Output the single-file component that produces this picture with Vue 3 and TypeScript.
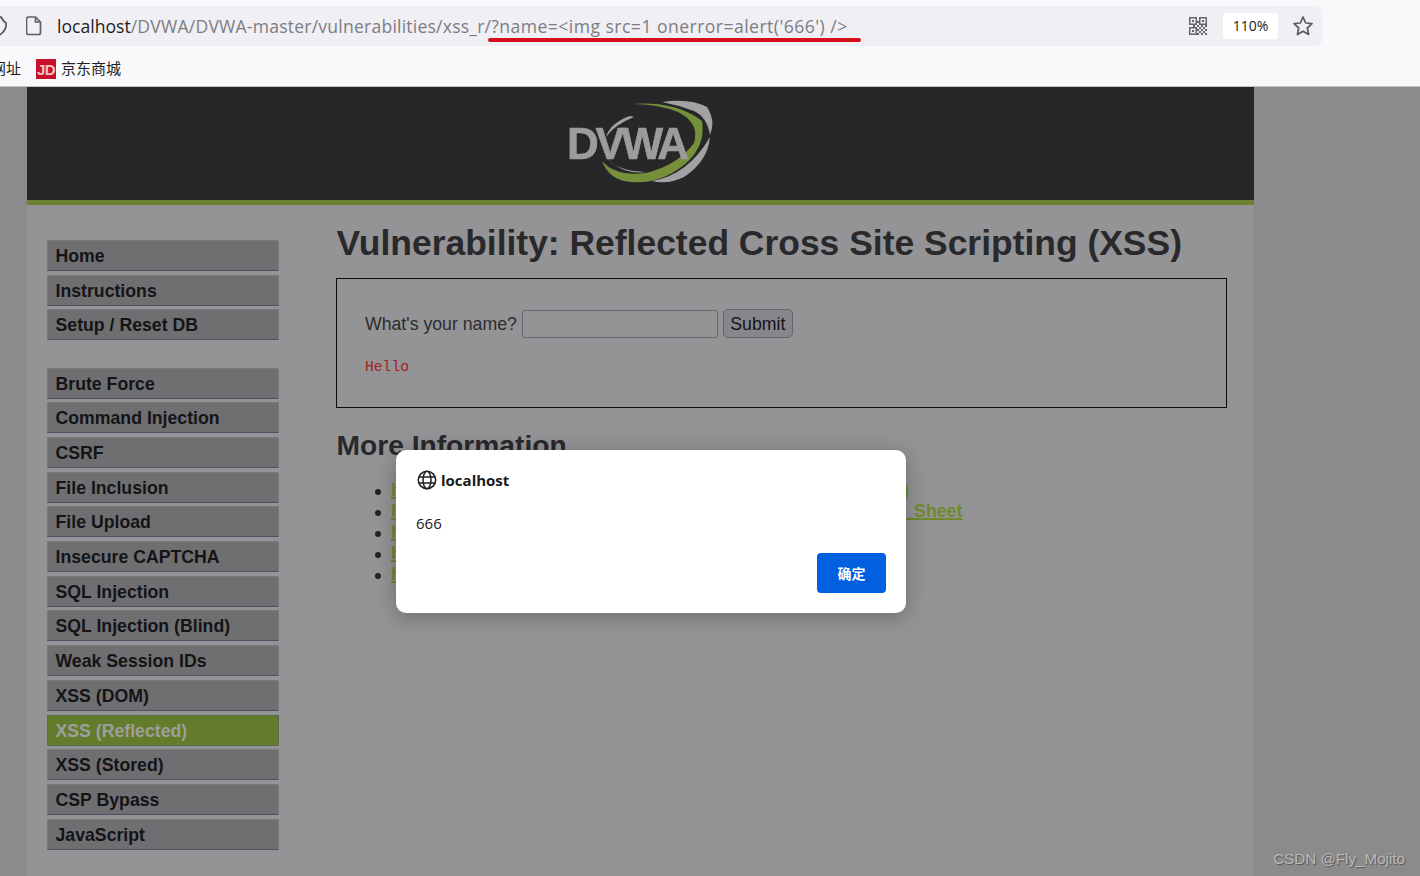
<script setup lang="ts">
const topMenu: string[] = ['Home', 'Instructions', 'Setup / Reset DB']
const vulnMenu: string[] = [
  'Brute Force',
  'Command Injection',
  'CSRF',
  'File Inclusion',
  'File Upload',
  'Insecure CAPTCHA',
  'SQL Injection',
  'SQL Injection (Blind)',
  'Weak Session IDs',
  'XSS (DOM)',
  'XSS (Reflected)',
  'XSS (Stored)',
  'CSP Bypass',
  'JavaScript',
]
const links: string[] = [
  'https://www.owasp.org/index.php/Cross-site_Scripting_(XSS)',
  'https://www.owasp.org/index.php/XSS_Filter_Evasion_Cheat_Sheet',
  'https://en.wikipedia.org/wiki/Cross-site_scripting',
  'http://www.cgisecurity.com/xss-faq.html',
  'http://www.scriptalert1.com/',
]
</script>

<template>
  <div class="screen">
    <div class="browser">
      <div class="address">
        <svg class="shield" width="20" height="24" viewBox="0 0 20 24">
          <path d="M-4 4 L3 3 Q5 7 8 9 Q9 17 0 22" fill="none" stroke="#555" stroke-width="1.7" stroke-linejoin="round" />
        </svg>
        <svg class="page-icon" width="16" height="20" viewBox="0 0 16 20">
          <path d="M2.500 1h7l5 5v10.500a2 2 0 0 1-2 2h-10a2 2 0 0 1-2-2v-13.500a2 2 0 0 1 2-2z M9.500 1v5h5" fill="none" stroke="#5f5f64" stroke-width="1.700" stroke-linejoin="round" />
        </svg>
        <div class="url">
          <span class="host">localhost</span><span class="path">/DVWA/DVWA-master/vulnerabilities/xss_r/</span><span class="path query">?name=&lt;img src=1 onerror=alert('666') /&gt;</span>
        </div>
        <svg class="qr" width="18" height="18" viewBox="0 0 18 18" fill="#66666b">
          <path d="M0 0h8v8h-8z M1.500 1.500v5h5v-5z M3 3h2v2h-2z M10 0h8v8h-8z M11.500 1.500v5h5v-5z M13 3h2v2h-2z M0 10h8v8h-8z M1.500 11.500v5h5v-5z M3 13h2v2h-2z" fill-rule="evenodd" />
          <path d="M8 4h2v2h-2z M8 8h2v2h-2z M4 8h2v2h-2z M12 8h2v2h-2z M16 8h2v2h-2z M10 10h2v2h-2z M14 10h2v2h-2z M12 12h2v2h-2z M16 12h2v2h-2z M10 14h2v2h-2z M14 14h2v2h-2z M12 16h2v2h-2z M16 16h2v2h-2z M8 12h2v2h-2z M8 16h2v2h-2z" />
        </svg>
        <div class="zoom">110%</div>
        <svg class="star" width="22" height="22" viewBox="0 0 22 22">
          <path d="M11 2l2.700 6 6.300.700-4.700 4.300 1.300 6.500-5.600-3.300-5.600 3.300 1.300-6.500-4.700-4.300 6.300-.700z" fill="none" stroke="#5a5a5f" stroke-width="1.700" stroke-linejoin="round" />
        </svg>
        <div class="url-mark"></div>
      </div>
      <div class="bookmarks">
        <span class="bm-cut">网址</span>
        <span class="jd">JD</span>
        <span class="bm-label">京东商城</span>
      </div>
    </div>

    <div class="page">
      <div class="banner">
        <svg width="150" height="90" viewBox="0 0 150 90">
          <g class="logo-art">
            <path d="M66 5 Q110 2 136 22 Q140 48 118 66 Q90 88 58 82 Q42 78 36 62 Q50 78 80 74 Q112 66 128 44 Q134 24 112 13 Q92 5 66 5z" fill="#76903a" />
            <path d="M96 3 Q124 -1 141 8 Q150 22 144 36 Q141 18 128 12 Q112 6 96 3z" fill="#a2a2a5" />
            <path d="M144 38 Q142 62 118 78 Q102 86 86 82 Q122 76 144 38z" fill="#a2a2a5" />
            <path d="M64 17 Q44 24 40 38 Q48 26 68 18z" fill="#a2a2a5" />
            <path d="M40 58 Q50 72 80 73 Q56 76 40 58z" fill="#a2a2a5" />
          </g>
          <text x="1" y="60" class="logo-text">DVWA</text>
        </svg>
      </div>
      <div class="columns">
        <nav class="side">
          <div class="menu-block">
            <div v-for="item in topMenu" :key="item" class="menu-item">{{ item }}</div>
          </div>
          <div class="menu-block">
            <div
              v-for="item in vulnMenu"
              :key="item"
              class="menu-item"
              :class="{ selected: item === 'XSS (Reflected)' }"
            >{{ item }}</div>
          </div>
        </nav>
        <main class="body">
          <h1>Vulnerability: Reflected Cross Site Scripting (XSS)</h1>
          <div class="vuln-box">
            <div class="form-row">
              <span>What's your name?</span>
              <input class="name-input" type="text" />
              <button class="submit" type="button">Submit</button>
            </div>
            <pre class="hello">Hello</pre>
          </div>
          <h2>More Information</h2>
          <ul>
            <li v-for="link in links" :key="link"><a>{{ link }}</a></li>
          </ul>
        </main>
      </div>
    </div>

    <div class="dialog">
      <div class="dialog-head">
        <svg width="20" height="20" viewBox="0 0 20 20" fill="none" stroke="#1f1f1f" stroke-width="1.500">
          <circle cx="10" cy="10" r="8.700" />
          <ellipse cx="10" cy="10" rx="4" ry="8.700" />
          <path d="M1.800 7h16.400 M1.800 13h16.400" />
        </svg>
        <span>localhost</span>
      </div>
      <div class="dialog-msg">666</div>
      <div class="dialog-foot">
        <button class="ok" type="button">确定</button>
      </div>
    </div>

    <div class="watermark">CSDN @Fly_Mojito</div>
  </div>
</template>

<style>
html,
body {
  margin: 0;
  overflow: hidden;
}
</style>

<style scoped>
.screen {
  position: relative;
  width: 1420px;
  height: 876px;
  overflow: hidden;
  background: #8b8b8b;
  font-family: "Liberation Sans", Arial, sans-serif;
}
.browser {
  height: 80px;
  background: #f9f9fc;
  border-bottom: 1px solid #c4c4c4;
  padding-top: 6px;
}
.address {
  position: relative;
  display: flex;
  align-items: center;
  width: 1322px;
  height: 40px;
  box-sizing: border-box;
  background: #efeff4;
  border-radius: 0 7px 7px 0;
}
.shield {
  margin-left: -2px;
}
.page-icon {
  margin-left: 8px;
}
.url {
  margin-left: 15px;
  flex: 1;
  font-family: "Open Sans", "Noto Sans", sans-serif;
  font-size: 17.600px;
  white-space: nowrap;
  padding-bottom: 1px;
}
.host {
  color: #1e1e22;
}
.path {
  color: #7d7d83;
  letter-spacing: 0.200px;
}
.query {
  letter-spacing: 0.450px;
}
.qr {
  margin-right: 16px;
}
.zoom {
  width: 55px;
  height: 26px;
  line-height: 26px;
  text-align: center;
  background: #fff;
  border-radius: 3px;
  font-family: "Open Sans", sans-serif;
  font-size: 14px;
  color: #222;
  margin-right: 14px;
}
.star {
  margin-right: 8px;
}
.url-mark {
  position: absolute;
  left: 488px;
  top: 32px;
  width: 373px;
  height: 4px;
  border-radius: 2px;
  background: #d8101e;
}
.bookmarks {
  display: flex;
  align-items: center;
  height: 40px;
  padding-top: 2px;
  box-sizing: border-box;
  font-family: "Noto Sans CJK SC", sans-serif;
  font-size: 15px;
  color: #222;
}
.bm-cut {
  margin-left: -9px;
  width: 45px;
}
.jd {
  width: 20px;
  height: 20px;
  margin-top: 4px;
  line-height: 21px;
  text-align: center;
  background: #c8102a;
  color: #f3c3ca;
  font-family: "Liberation Sans", sans-serif;
  font-size: 15px;
  font-weight: 700;
  letter-spacing: -0.500px;
}
.bm-label {
  margin-left: 5px;
}
.page {
  width: 1227px;
  height: 789px;
  margin-left: 27px;
  background: #949496;
}
.banner {
  display: flex;
  justify-content: center;
  box-sizing: border-box;
  height: 118px;
  padding: 12px 0 0 1px;
  background: #27272a;
  border-bottom: 5px solid #6c8131;
}
.logo-art {
  filter: blur(0.4px);
}
.logo-text {
  font-family: "Liberation Sans", sans-serif;
  font-weight: 700;
  font-size: 44px;
  letter-spacing: -3.300px;
  fill: #9c9c9f;
  stroke: #9c9c9f;
  stroke-width: 0.6px;
  filter: blur(0.4px);
}
.columns {
  display: flex;
}
.side {
  width: 232px;
  margin-left: 20px;
  padding-top: 35px;
}
.menu-block {
  margin-bottom: 23.300px;
}
.menu-block:first-child {
  margin-bottom: 27.300px;
}
.menu-item {
  height: 31px;
  line-height: 30.400px;
  margin-bottom: 3.700px;
  padding-left: 7.500px;
  box-sizing: border-box;
  background: #6f6f72;
  border-top: 1px solid #79797c;
  border-right: 1px solid #79797c;
  border-left: 1px solid #79797c;
  border-bottom: 1px solid #4c5060;
  font-size: 17.700px;
  font-weight: 700;
  color: #141416;
}
.menu-item.selected {
  background: #627c2b;
  color: #9e9e9e;
  border-color: #5a6a50;
}
.body {
  margin-left: 57px;
  width: 891px;
  color: #2b2b2d;
}
h1 {
  margin: 16px 0 13px 0.500px;
  font-size: 35.450px;
  line-height: 44px;
  font-weight: 700;
  color: #29292c;
}
.vuln-box {
  box-sizing: border-box;
  height: 130px;
  border: 1px solid #0c0c0c;
  padding: 30px 28px 0;
}
.form-row {
  display: flex;
  align-items: center;
  font-size: 17.700px;
  color: #2c2c2f;
}
.form-row span {
  padding-top: 1px;
}
.name-input {
  width: 196px;
  height: 28px;
  box-sizing: border-box;
  margin-left: 5px;
  padding: 0;
  background: #949496;
  border: 1px solid #66666c;
  border-radius: 3px;
}
.submit {
  width: 70px;
  height: 29px;
  margin-left: 5px;
  padding: 1px 0 0;
  background: #87878b;
  border: 1px solid #66666c;
  border-radius: 5px;
  font-family: "Liberation Sans", sans-serif;
  font-size: 17.700px;
  color: #131316;
}
.hello {
  margin: 19px 0 0;
  font-family: "Liberation Mono", monospace;
  font-size: 14.670px;
  line-height: 20px;
  color: #a41d20;
}
h2 {
  margin: 20px 0 0 0.500px;
  font-size: 28.200px;
  line-height: 34px;
  font-weight: 700;
  color: #29292c;
}
ul {
  margin: 18px 0 0;
  padding-left: 55px;
  list-style: none;
  font-size: 17.760px;
  line-height: 21px;
}
li {
  display: flex;
  align-items: center;
}
li::before {
  content: "";
  flex: none;
  width: 6px;
  height: 6px;
  margin: 3px 10px 0 -16px;
  border-radius: 50%;
  background: #232325;
}
a {
  color: #6f8a2a;
  font-weight: 700;
  text-decoration: underline;
  text-decoration-thickness: 2px;
}
.dialog {
  position: absolute;
  left: 396px;
  top: 450px;
  width: 510px;
  height: 163px;
  box-sizing: border-box;
  padding: 20px 20px 20px;
  background: #fff;
  border-radius: 10px;
  box-shadow: 0 4px 22px rgba(0, 0, 0, 0.28);
  font-family: "Open Sans", "Noto Sans", sans-serif;
  color: #1a1a1c;
}
.dialog-head {
  display: flex;
  align-items: center;
  gap: 4px;
  height: 20px;
  padding-left: 1px;
  font-size: 15px;
  font-weight: 700;
}
.dialog-msg {
  margin-top: 23px;
  font-size: 15px;
  line-height: 20px;
}
.dialog-foot {
  display: flex;
  justify-content: flex-end;
  margin-top: 20px;
}
.ok {
  width: 69px;
  height: 40px;
  padding: 0;
  background: #0060df;
  border: none;
  border-radius: 4px;
  color: #fff;
  font-family: "Noto Sans CJK SC", sans-serif;
  font-size: 14px;
  font-weight: 700;
}
.watermark {
  position: absolute;
  right: 15px;
  bottom: 9px;
  font-family: "Liberation Sans", sans-serif;
  font-size: 15.200px;
  color: #b9b9b9;
  text-shadow: 1px 1px 1px #555;
}
</style>
